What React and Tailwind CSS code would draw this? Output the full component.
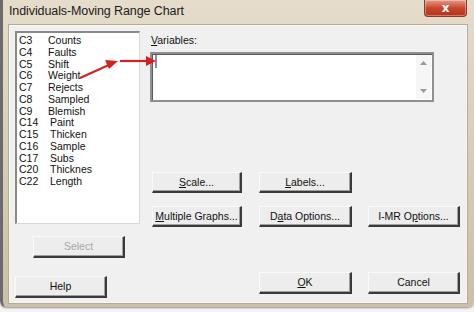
import React from 'react';

const columns = [
  ['C3', 'Counts'],
  ['C4', 'Faults'],
  ['C5', 'Shift'],
  ['C6', 'Weight'],
  ['C7', 'Rejects'],
  ['C8', 'Sampled'],
  ['C9', 'Blemish'],
  ['C14', 'Paint'],
  ['C15', 'Thicken'],
  ['C16', 'Sample'],
  ['C17', 'Subs'],
  ['C20', 'Thicknes'],
  ['C22', 'Length'],
];

function Btn({ children, className = '', disabled }) {
  return (
    <button
      className={`h-[21px] border-t border-l border-t-[#fafafa] border-l-[#fafafa] border-b-2 border-r-2 border-b-[#3a3a3a] border-r-[#3a3a3a] bg-[#ededed] text-[10.5px] leading-none shadow-[inset_-1px_-1px_0_#a0a0a0] ${
        disabled ? 'text-[#a8a8a8]' : 'text-[#111]'
      } ${className}`}
    >
      {children}
    </button>
  );
}

export default function App() {
  return (
    <div
      className="relative w-[474px] h-[312px] overflow-hidden bg-[#f4f4f4]"
      style={{ fontFamily: '"Liberation Sans", Arial, sans-serif' }}
    >
      {/* Window frame */}
      <div className="w-[474px] h-[307px] flex flex-col border-l-[3px] border-l-[#6b6b6b] rounded-b-[6px] bg-gradient-to-b from-[#e6dccb] via-[#d8cdb8] to-[#cbbfa7] shadow-[0_1px_2px_rgba(0,0,0,0.4)]">
        {/* Title bar */}
        <div className="h-[25px] flex items-start">
          <div className="pl-[6px] pt-[5px] text-[12.5px] text-[#1a1a1a] leading-none tracking-[-0.1px]">
            Individuals-Moving Range Chart
          </div>
          <div className="ml-auto mr-[7px] w-[43px] h-[17px] rounded-b-[4px] border border-t-0 border-[#8a3a2c] bg-gradient-to-b from-[#e39a86] via-[#c9452c] to-[#b8321b] flex items-center justify-center shadow-[inset_0_0_0_1px_rgba(255,255,255,0.35)]">
            <span className="text-white text-[12px] font-bold leading-none" style={{ fontFamily: '"DejaVu Sans", sans-serif' }}>x</span>
          </div>
        </div>

        {/* Client area */}
        <div className="ml-[6px] mr-[7px] h-[278px] border border-[#f8f6f0] outline outline-1 outline-[#b7ab92] bg-[#f0f0f0] flex relative">
          {/* Left column */}
          <div className="pl-[5px] pt-[5px] w-[136px] flex flex-col">
            <div className="w-[125px] h-[193px] bg-white border-t-2 border-l-2 border-t-[#8a8a8a] border-l-[#8a8a8a] border-b border-r border-b-[#d8d8d8] border-r-[#d8d8d8] pt-[2px] pl-[2px] text-[10.5px] text-[#111]">
              {columns.map(([c, name]) => (
                <div key={c} className="flex h-[11.75px] leading-[11.75px]">
                  <span className={c.length > 2 ? 'w-[31px]' : 'w-[29px]'}>{c}</span>
                  <span>{name}</span>
                </div>
              ))}
            </div>
            <Btn disabled className="mt-[12px] ml-[18px] w-[92px] h-[22px]">Select</Btn>
            <Btn className="mt-[18px] w-[92px] h-[22px]">Help</Btn>
          </div>

          {/* Right column */}
          <div className="pl-[4px] pt-[9px] flex flex-col">
            <div className="pl-[1px] text-[10.5px] text-[#111] leading-none h-[17px]">
              <span className="underline">V</span>ariables:
            </div>
            <div className="w-[284px] h-[50px] bg-white border-2 border-[#8f8f8f] flex shadow-[inset_1px_1px_0_#5a5a5a]">
              <div className="flex-1" />
              <div className="w-[15px] my-[1px] mr-[1px] bg-[#f6f6f6] flex flex-col items-center justify-between py-[6px]">
                <svg width="7" height="4" viewBox="0 0 7 4"><path d="M0 4 L3.5 0 L7 4 Z" fill="#9a9a9a" /></svg>
                <svg width="7" height="4" viewBox="0 0 7 4"><path d="M0 0 L3.5 4 L7 0 Z" fill="#9a9a9a" /></svg>
              </div>
            </div>

            <div className="mt-[70px] flex ml-[2px]">
              <Btn className="w-[90px]"><span className="underline">S</span>cale...</Btn>
              <Btn className="ml-[17px] w-[93px]"><span className="underline">L</span>abels...</Btn>
            </div>
            <div className="mt-[13px] flex ml-[2px]">
              <Btn className="w-[90px]"><span className="underline">M</span>ultiple Graphs...</Btn>
              <Btn className="ml-[17px] w-[93px]">D<span className="underline">a</span>ta Options...</Btn>
              <Btn className="ml-[16px] w-[92px]">I-MR O<span className="underline">p</span>tions...</Btn>
            </div>
            <div className="mt-[45px] flex ml-[109px]">
              <Btn className="w-[93px] h-[22px]"><span className="underline">O</span>K</Btn>
              <Btn className="ml-[16px] w-[92px] h-[22px]">Cancel</Btn>
            </div>
          </div>
        </div>
      </div>

      {/* Red annotation arrows */}
      <svg className="absolute left-0 top-0 pointer-events-none" width="474" height="312">
        <line x1="80" y1="78" x2="111" y2="64" stroke="#d42020" strokeWidth="2.2" />
        <path d="M118 61 L105 60 L109 69 Z" fill="#d42020" />
        <line x1="120" y1="61" x2="148" y2="61" stroke="#d42020" strokeWidth="2.2" />
        <path d="M156 61 L146 56 L146 66 Z" fill="#d42020" />
        <line x1="156" y1="55" x2="156" y2="68" stroke="#222" strokeWidth="1" />
      </svg>
    </div>
  );
}
